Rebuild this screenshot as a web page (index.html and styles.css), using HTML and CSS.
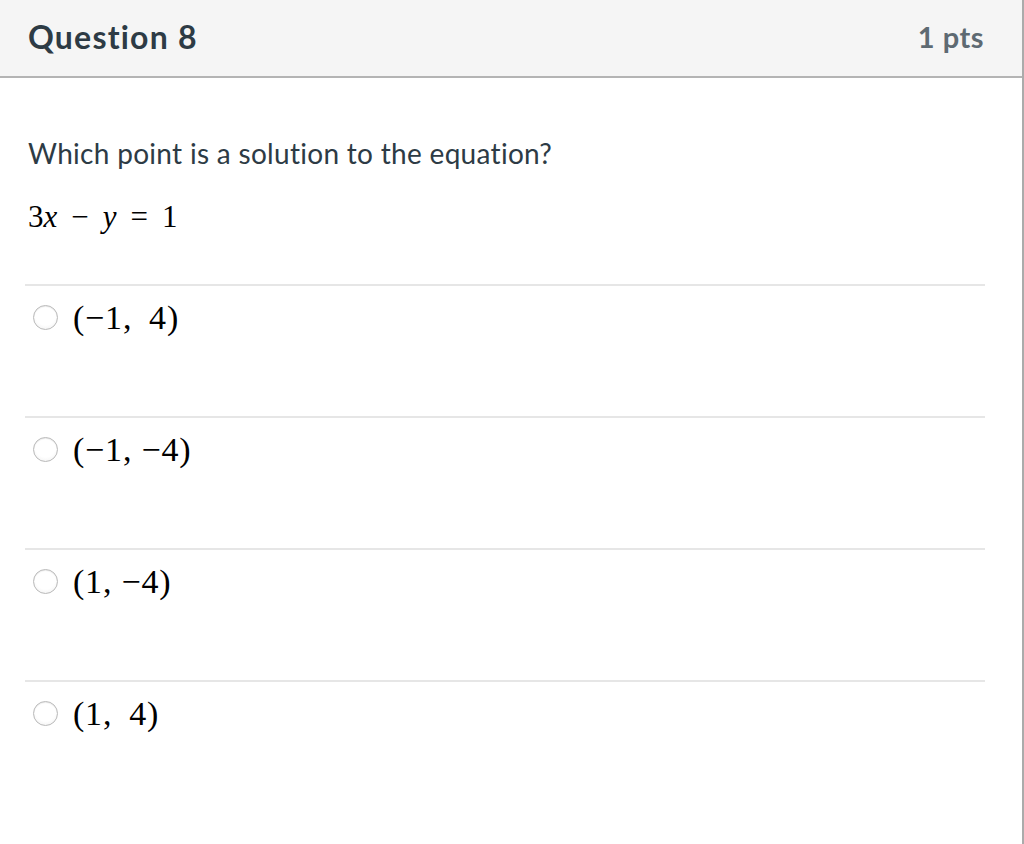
FILE: index.html
```html
<!DOCTYPE html>
<html lang="en">
<head>
<meta charset="utf-8">
<title>Question 8</title>
<link rel="stylesheet" href="styles.css">
</head>
<body>
<div class="question">
  <div class="header">
    <h2 class="title">Question 8</h2>
    <div class="points">1 pts</div>
  </div>
  <div class="content">
    <p class="prompt">Which point is a solution to the equation?</p>
    <p class="equation"><span class="m">3</span><span class="mi">x</span><span class="op">−</span><span class="mi">y</span><span class="op">=</span><span class="m">1</span></p>
  </div>
  <div class="answers">
    <div class="answer">
      <span class="radio"></span>
      <span class="math">(−1,&#8201; 4)</span>
    </div>
    <div class="answer">
      <span class="radio"></span>
      <span class="math">(−1, −4)</span>
    </div>
    <div class="answer">
      <span class="radio"></span>
      <span class="math">(1, −4)</span>
    </div>
    <div class="answer">
      <span class="radio"></span>
      <span class="math">(1,&#8201; 4)</span>
    </div>
  </div>
</div>
</body>
</html>
```

FILE: styles.css
```css
* { box-sizing: border-box; }
html, body { margin: 0; padding: 0; background: #ffffff; }
body { font-family: Lato, "Liberation Sans", sans-serif; color: #2d3b45; }

.question {
  width: 1024px;
  height: 844px;
  border-right: 2px solid #ababab;
  overflow: hidden;
}

.header {
  height: 78px;
  background: #f5f5f5;
  border-bottom: 2px solid #b4b4b4;
  display: flex;
  align-items: center;
  justify-content: space-between;
  padding: 0 38px 4px 28px;
}

.title {
  margin: 0;
  font-size: 32px;
  font-weight: 700;
  color: #2d3b45;
  letter-spacing: 1.2px;
}

.points {
  font-size: 29px;
  font-weight: 700;
  color: #5e6a72;
  letter-spacing: 0.5px;
}

.content {
  padding: 57px 37px 0 28px;
}

.prompt {
  margin: 0;
  font-size: 28px;
  line-height: 36px;
  letter-spacing: 0.3px;
}

.equation {
  margin: 28px 0 0 0;
  font-family: "Liberation Serif", "Times New Roman", serif;
  font-size: 31px;
  line-height: 36px;
  color: #000;
}
.equation .mi { font-style: italic; }
.equation .op { margin: 0 14px; }

.answers {
  margin: 49px 37px 0 25px;
}

.answer {
  height: 132px;
  border-top: 2px solid #e6e6e6;
  display: flex;
  align-items: flex-start;
  padding: 14px 0 0 8px;
  gap: 15px;
}

.radio {
  width: 25px;
  height: 25px;
  margin-top: 5px;
  border-radius: 50%;
  border: 1px solid #b9b9b9;
  background: radial-gradient(circle at 50% 40%, #ffffff 55%, #ececec 100%);
  box-shadow: inset 0 1px 1px rgba(0,0,0,0.08);
  flex: none;
}

.math {
  font-family: "Liberation Serif", "Times New Roman", serif;
  font-size: 34px;
  line-height: 36px;
  letter-spacing: 0.8px;
  color: #000;
}
```
